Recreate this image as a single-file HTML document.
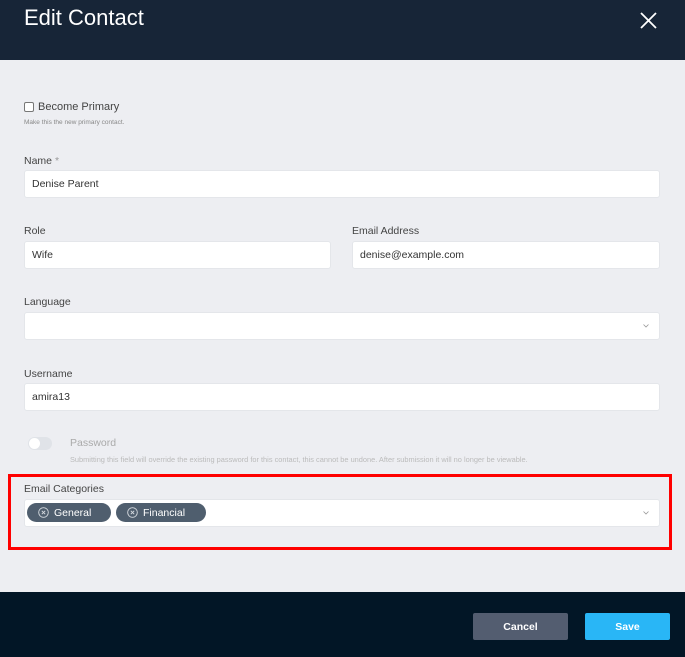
<!DOCTYPE html>
<html><head><style>
*{margin:0;padding:0;box-sizing:border-box}
body{width:685px;height:657px;background:#edeef2;font-family:"Liberation Sans",sans-serif;position:relative;overflow:hidden;color:#333}
.a{position:absolute}
.hdr{left:0;top:0;width:685px;height:60px;background:#172537}
.lbl{font-size:10.5px;color:#444}
.inp{background:#fff;border:1px solid #e4e6ea;border-radius:3px;font-size:10.5px;color:#333;padding-left:7px;display:flex;align-items:center}
.chip{background:#4f5e6e;color:#fff;border-radius:10px;font-size:10.5px;display:flex;align-items:center;height:19px;top:503px}
.chip svg{margin:0 5px 0 11px}
</style></head><body>
<div class="a hdr"></div>
<div class="a" style="left:24px;top:5px;font-size:22px;color:#fff">Edit Contact</div>
<svg class="a" style="left:640px;top:12px" width="17" height="17"><path d="M1 1L16 16M16 1L1 16" stroke="#fff" stroke-width="1.8"/></svg>

<div class="a" style="left:24px;top:102px;width:10px;height:10px;border:1px solid #777;border-radius:2px;background:#fff"></div>
<div class="a" style="left:38px;top:101px;font-size:11px;color:#444">Become Primary</div>
<div class="a" style="left:24px;top:119px;font-size:6.5px;color:#888">Make this the new primary contact.</div>

<div class="a lbl" style="left:24px;top:155px">Name <span style="color:#999">*</span></div>
<div class="a inp" style="left:24px;top:170px;width:636px;height:28px">Denise Parent</div>

<div class="a lbl" style="left:24px;top:225px">Role</div>
<div class="a inp" style="left:24px;top:241px;width:307px;height:28px">Wife</div>
<div class="a lbl" style="left:352px;top:225px">Email Address</div>
<div class="a inp" style="left:352px;top:241px;width:308px;height:28px">denise@example.com</div>

<div class="a lbl" style="left:24px;top:296px">Language</div>
<div class="a inp" style="left:24px;top:312px;width:636px;height:28px"></div>
<svg class="a" style="left:643px;top:324px" width="6" height="4"><path d="M0.5 0.5L3 3L5.5 0.5" stroke="#999" fill="none" stroke-width="0.8"/></svg>

<div class="a lbl" style="left:24px;top:368px">Username</div>
<div class="a inp" style="left:24px;top:383px;width:636px;height:28px">amira13</div>

<div class="a" style="left:28px;top:437px;width:24px;height:13px;border-radius:7px;background:#e0e3e8"></div>
<div class="a" style="left:29px;top:438px;width:11px;height:11px;border-radius:50%;background:#fff"></div>
<div class="a" style="left:70px;top:437px;font-size:10.5px;color:#aaa">Password</div>
<div class="a" style="left:70px;top:455px;font-size:7.4px;color:#bbb;white-space:nowrap">Submitting this field will override the existing password for this contact, this cannot be undone. After submission it will no longer be viewable.</div>

<div class="a" style="left:8px;top:474px;width:664px;height:76px;border:3px solid #f00"></div>
<div class="a lbl" style="left:24px;top:483px">Email Categories</div>
<div class="a inp" style="left:24px;top:499px;width:636px;height:28px"></div>
<div class="a chip" style="left:27px;width:84px"><svg width="11" height="11"><circle cx="5.5" cy="5.5" r="4.8" fill="none" stroke="#d6dbe0" stroke-width="0.9"/><path d="M3.8 3.8L7.2 7.2M7.2 3.8L3.8 7.2" stroke="#d6dbe0" stroke-width="0.9"/></svg>General</div>
<div class="a chip" style="left:116px;width:90px"><svg width="11" height="11"><circle cx="5.5" cy="5.5" r="4.8" fill="none" stroke="#d6dbe0" stroke-width="0.9"/><path d="M3.8 3.8L7.2 7.2M7.2 3.8L3.8 7.2" stroke="#d6dbe0" stroke-width="0.9"/></svg>Financial</div>
<svg class="a" style="left:643px;top:511px" width="6" height="4"><path d="M0.5 0.5L3 3L5.5 0.5" stroke="#999" fill="none" stroke-width="0.8"/></svg>

<div class="a" style="left:0;top:592px;width:685px;height:65px;background:#021626"></div>
<div class="a" style="left:473px;top:613px;width:95px;height:27px;background:#535d70;border-radius:2px;color:#fff;font-size:10.5px;font-weight:bold;display:flex;align-items:center;justify-content:center">Cancel</div>
<div class="a" style="left:585px;top:613px;width:85px;height:27px;background:#29b6f6;border-radius:2px;color:#fff;font-size:10.5px;font-weight:bold;display:flex;align-items:center;justify-content:center">Save</div>
</body></html>
